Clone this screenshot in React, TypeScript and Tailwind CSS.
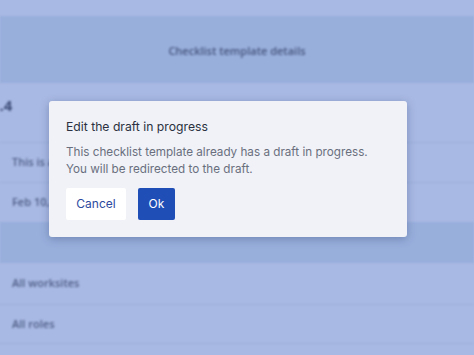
import React from "react";

export default function App() {
  return (
    <div className="relative w-[474px] h-[355px] overflow-hidden bg-[#a8b9e3]" style={{ fontFamily: "Inter, 'Noto Sans', sans-serif" }}>
      <div className="blur-[0.8px] flex flex-col" style={{ fontFamily: "'Open Sans', Lato, sans-serif" }}>
        <div className="h-[16px] bg-[#a8b9e3]" />
        <div className="h-[67px] bg-[#98aedb] flex items-center justify-center pt-[4px]">
          <span className="text-[11px] font-semibold text-[#46567e]">Checklist template details</span>
        </div>
        <div className="h-[60px] flex items-center border-b border-[#9dafdb]">
          <span className="ml-[-9px] text-[15px] font-bold text-[#3e4e78] mt-[-14px]">1.4</span>
        </div>
        <div className="h-[40px] flex items-center pl-[12px] border-b border-[#9dafdb]">
          <span className="text-[11px] font-semibold text-[#4e5d86]">This is a checklist template</span>
        </div>
        <div className="h-[39px] flex items-center pl-[12px]">
          <span className="text-[11px] font-semibold text-[#4e5d86]">Feb 10, 2020</span>
        </div>
        <div className="h-[41px] bg-[#98aedb]" />
        <div className="h-[42px] flex items-center pl-[12px] border-b border-[#9dafdb]">
          <span className="text-[11px] font-semibold text-[#4e5d86]">All worksites</span>
        </div>
        <div className="h-[39px] flex items-center pl-[12px] border-b border-[#9dafdb]">
          <span className="text-[11px] font-semibold text-[#4e5d86]">All roles</span>
        </div>
      </div>

      <div className="absolute left-[49px] top-[101px] w-[358px] h-[136px] bg-[#f0f2f7] rounded-[3px] shadow-[0_2px_8px_rgba(40,60,110,0.35)] px-[17px] pt-[17px]">
        <div className="text-[12.2px] leading-[17px] text-[#2b3140]">Edit the draft in progress</div>
        <div className="mt-[9px] text-[11.7px] leading-[17px] text-[#6a6f7e]">
          This checklist template already has a draft in progress.
          <br />
          You will be redirected to the draft.
        </div>
        <div className="mt-[10px] flex gap-[12px]">
          <button className="h-[32px] w-[60px] bg-white rounded-[2px] text-[12px] text-[#2c4a9e]">Cancel</button>
          <button className="h-[32px] w-[37px] bg-[#1f4eb6] rounded-[2px] text-[12px] text-white">Ok</button>
        </div>
      </div>
    </div>
  );
}
